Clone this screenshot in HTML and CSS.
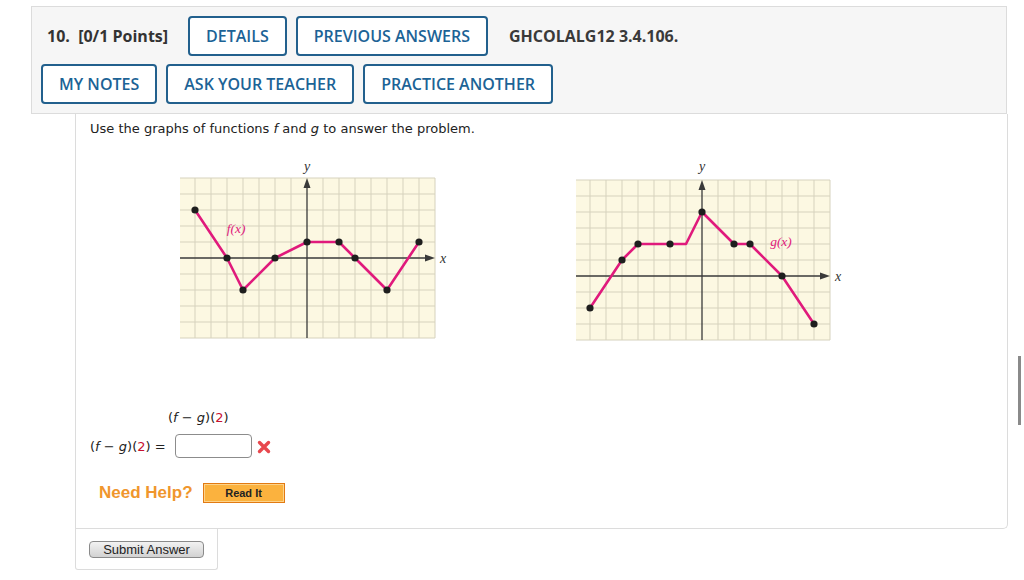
FILE: index.html
```html
<!DOCTYPE html>
<html>
<head>
<meta charset="utf-8">
<link rel="stylesheet" href="styles.css">
</head>
<body>
<div class="header">
  <div class="row row-first">
    <span class="qnum">10.&nbsp; [0/1 Points]</span>
    <button class="btn btn-details">DETAILS</button>
    <button class="btn">PREVIOUS ANSWERS</button>
    <span class="code">GHCOLALG12 3.4.106.</span>
  </div>
  <div class="row">
    <button class="btn">MY NOTES</button>
    <button class="btn">ASK YOUR TEACHER</button>
    <button class="btn">PRACTICE ANOTHER</button>
  </div>
</div>

<div class="question">
  <p class="intro">Use the graphs of functions <i>f</i> and <i>g</i> to answer the problem.</p>
  <div class="graphs">
    <svg class="graph" width="290" height="190" viewBox="-137 -100 290 190">
      <rect x="-127" y="-80" width="255" height="160" fill="#fcf8e2"/>
      <g stroke="#d6d2bd" stroke-width="1">
        <path d="M-112 -80V80M-96 -80V80M-80 -80V80M-64 -80V80M-48 -80V80M-32 -80V80M-16 -80V80M16 -80V80M32 -80V80M48 -80V80M64 -80V80M80 -80V80M96 -80V80M112 -80V80M128 -80V80"/>
        <path d="M-127 -80H128M-127 -64H128M-127 -48H128M-127 -32H128M-127 -16H128M-127 16H128M-127 32H128M-127 48H128M-127 64H128M-127 80H128"/>
      </g>
      <g stroke="#3a3a3a" stroke-width="1.3" fill="none">
        <path d="M-127 0H120"/>
        <path d="M0 80V-72"/>
      </g>
      <path d="M0 -80L-3.5 -70L3.5 -70Z" fill="#3a3a3a"/>
      <path d="M128 0L118 -3.5L118 3.5Z" fill="#3a3a3a"/>
      <text x="0" y="-87" class="axis-lbl" text-anchor="middle">y</text>
      <text x="133" y="5" class="axis-lbl">x</text>
      <text x="-71" y="-25" class="fn-lbl" text-anchor="middle">f(x)</text>
      <polyline points="-112,-48 -80,0 -64,32 -32,0 0,-16 32,-16 48,0 80,32 112,-16" fill="none" stroke="#e01a7c" stroke-width="2.6" stroke-linejoin="round"/>
      <g fill="#1e1e1e">
        <circle cx="-112" cy="-48" r="3.6"/><circle cx="-80" cy="0" r="3.6"/><circle cx="-64" cy="32" r="3.6"/>
        <circle cx="-32" cy="0" r="3.6"/><circle cx="0" cy="-16" r="3.6"/><circle cx="32" cy="-16" r="3.6"/>
        <circle cx="48" cy="0" r="3.6"/><circle cx="80" cy="32" r="3.6"/><circle cx="112" cy="-16" r="3.6"/>
      </g>
    </svg>
    <svg class="graph" width="290" height="190" viewBox="-137 -118 290 190">
      <rect x="-126" y="-96" width="254" height="160" fill="#fcf8e2"/>
      <g stroke="#d6d2bd" stroke-width="1">
        <path d="M-112 -96V64M-96 -96V64M-80 -96V64M-64 -96V64M-48 -96V64M-32 -96V64M-16 -96V64M16 -96V64M32 -96V64M48 -96V64M64 -96V64M80 -96V64M96 -96V64M112 -96V64M128 -96V64"/>
        <path d="M-126 -96H128M-126 -80H128M-126 -64H128M-126 -48H128M-126 -32H128M-126 -16H128M-126 16H128M-126 32H128M-126 48H128M-126 64H128"/>
      </g>
      <g stroke="#3a3a3a" stroke-width="1.3" fill="none">
        <path d="M-126 0H120"/>
        <path d="M0 64V-88"/>
      </g>
      <path d="M0 -96L-3.5 -86L3.5 -86Z" fill="#3a3a3a"/>
      <path d="M128 0L118 -3.5L118 3.5Z" fill="#3a3a3a"/>
      <text x="0" y="-105" class="axis-lbl" text-anchor="middle">y</text>
      <text x="133" y="5" class="axis-lbl">x</text>
      <text x="79" y="-30" class="fn-lbl" text-anchor="middle">g(x)</text>
      <polyline points="-112,32 -80,-16 -64,-32 -32,-32 -16,-32 0,-64 32,-32 48,-32 80,0 112,48" fill="none" stroke="#e01a7c" stroke-width="2.6" stroke-linejoin="round"/>
      <g fill="#1e1e1e">
        <circle cx="-112" cy="32" r="3.6"/><circle cx="-80" cy="-16" r="3.6"/><circle cx="-64" cy="-32" r="3.6"/>
        <circle cx="-32" cy="-32" r="3.6"/><circle cx="0" cy="-64" r="3.6"/><circle cx="32" cy="-32" r="3.6"/>
        <circle cx="48" cy="-32" r="3.6"/><circle cx="80" cy="0" r="3.6"/><circle cx="112" cy="48" r="3.6"/>
      </g>
    </svg>
  </div>

  <div class="expr">(<i>f</i> − <i>g</i>)(<span class="red">2</span>)</div>
  <div class="answer-row">
    <span class="expr-inline">(<i>f</i> − <i>g</i>)(<span class="red">2</span>) =</span>
    <span class="answer-box"></span>
    <svg class="wrong" width="14" height="14" viewBox="0 0 14 14"><path d="M2.5 2.5L11.5 11.5M11.5 2.5L2.5 11.5" stroke="#e8484e" stroke-width="3.4" stroke-linecap="round"/></svg>
  </div>

  <div class="help-row">
    <span class="need-help">Need Help?</span>
    <button class="read-it">Read It</button>
  </div>
</div>
<div class="submit-tab">
  <button class="submit">Submit Answer</button>
</div>

<div class="scroll-thumb"></div>
</body>
</html>
```

FILE: styles.css
```css
html, body {
  margin: 0;
  padding: 0;
  background: #ffffff;
}

body {
  font-family: "DejaVu Sans", Verdana, sans-serif;
  color: #222;
}

.header {
  margin: 6px 0 0 31px;
  width: 976px;
  background: #f6f6f6;
  border: 1px solid #dcdcdc;
  padding: 9px 0 8px 9px;
  box-sizing: border-box;
  height: 108px;
  display: flex;
  flex-direction: column;
  gap: 8px;
}

.row {
  display: flex;
  align-items: center;
  gap: 9px;
}

.row-first {
  padding-left: 6px;
}

.qnum {
  font-family: "Open Sans", sans-serif;
  font-weight: 700;
  font-size: 16px;
  color: #333;
  margin-right: 11px;
}

.code {
  font-family: "Open Sans", sans-serif;
  font-weight: 700;
  font-size: 16px;
  color: #3a3a3a;
  margin-left: 12px;
}

.btn {
  font-family: "Open Sans", sans-serif;
  font-weight: 600;
  font-size: 16px;
  color: #1c6396;
  background: #fff;
  border: 2px solid #22608d;
  border-radius: 4px;
  height: 40px;
  padding: 0 16px;
  margin: 0;
}

.btn-details {
  min-width: 98px;
}

.question {
  margin-left: 75px;
  width: 933px;
  height: 415px;
  box-sizing: border-box;
  border: 1px solid #dcdcdc;
  border-top: none;
  border-radius: 0 0 5px 0;
  padding: 0 14px;
}

.intro {
  margin: 0;
  padding-top: 7px;
  font-size: 13px;
  line-height: 16px;
  color: #222;
}

.graphs {
  display: flex;
  gap: 105px;
  margin-top: 21px;
  margin-left: 80px;
}

.graph {
  display: block;
}

.axis-lbl {
  font-family: "Liberation Serif", serif;
  font-style: italic;
  font-size: 14px;
  fill: #333;
}

.fn-lbl {
  font-family: "Liberation Serif", serif;
  font-style: italic;
  font-size: 13.5px;
  fill: #e01a7c;
}

.expr {
  margin-top: 61px;
  margin-left: 78px;
  font-size: 13px;
  line-height: 18px;
}

.red {
  color: #c8102e;
}

.answer-row {
  display: flex;
  align-items: center;
  margin-top: 7px;
  font-size: 13px;
}

.expr-inline {
  margin-right: 9px;
}

.answer-box {
  width: 77px;
  height: 24px;
  box-sizing: border-box;
  border: 1px solid #8c8c8c;
  border-radius: 4px;
  background: #fff;
}

.wrong {
  margin-left: 5px;
  margin-top: 1px;
}

.help-row {
  display: flex;
  align-items: center;
  margin-top: 25px;
  margin-left: 9px;
  gap: 10px;
}

.need-help {
  font-family: "Liberation Sans", Arial, sans-serif;
  font-weight: 700;
  font-size: 17px;
  color: #f0962d;
}

.read-it {
  font-family: "Liberation Sans", Arial, sans-serif;
  font-weight: 700;
  font-size: 11px;
  color: #222;
  width: 82px;
  height: 20px;
  padding: 0;
  background: #fbb23e;
  border: 1px solid #e27a12;
  box-shadow: inset 0 0 0 1px #fdd38a;
}

.submit-tab {
  margin-left: 75px;
  width: 143px;
  height: 41px;
  box-sizing: border-box;
  border: 1px solid #dcdcdc;
  border-top: none;
  border-radius: 0 0 3px 3px;
  padding: 10px 0 0 13px;
}

.submit {
  font-family: "Liberation Sans", Arial, sans-serif;
  font-size: 13px;
  color: #222;
  width: 115px;
  height: 17px;
  padding: 0;
  line-height: 15px;
  background: linear-gradient(#f2f2f2, #d2d2d2);
  border: 1px solid #8a8a8a;
  border-radius: 4px;
}

.scroll-thumb {
  position: absolute;
  left: 1018px;
  top: 356px;
  width: 3px;
  height: 69px;
  background: #8a8a8a;
}
```
